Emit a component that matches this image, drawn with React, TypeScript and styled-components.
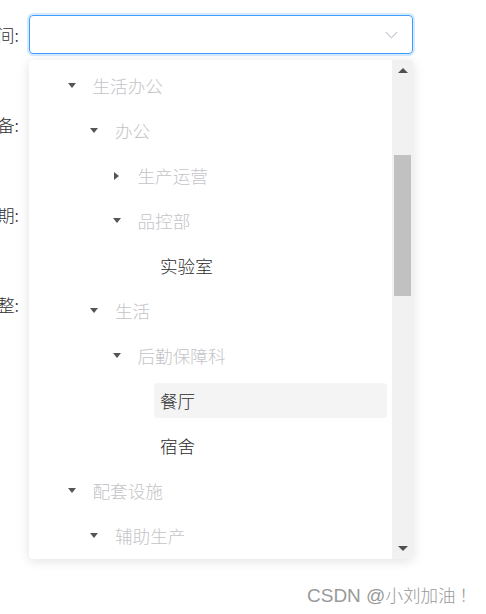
import React from 'react'
import styled, { createGlobalStyle } from 'styled-components'

interface TreeNode {
  label: string
  level: number
  caret?: 'down' | 'right'
  leaf?: boolean
  hover?: boolean
}

const nodes: TreeNode[] = [
  { label: '生活办公', level: 0, caret: 'down' },
  { label: '办公', level: 1, caret: 'down' },
  { label: '生产运营', level: 2, caret: 'right' },
  { label: '品控部', level: 2, caret: 'down' },
  { label: '实验室', level: 3, leaf: true },
  { label: '生活', level: 1, caret: 'down' },
  { label: '后勤保障科', level: 2, caret: 'down' },
  { label: '餐厅', level: 3, leaf: true, hover: true },
  { label: '宿舍', level: 3, leaf: true },
  { label: '配套设施', level: 0, caret: 'down' },
  { label: '辅助生产', level: 1, caret: 'down' }
]

const labels = ['时间:', '设备:', '日期:', '调整:']

const App: React.FC = () => {
  return (
    <Page>
      <GlobalStyle />
      <Form>
        {labels.map((label, i) => (
          <FormRow key={label}>
            <Label>{label}</Label>
            {i === 0 && (
              <SelectBox>
                <Chevron viewBox='0 0 14 8'>
                  <path d='M1 1 L7 7 L13 1' fill='none' stroke='#c0c4cc' strokeWidth='1.2' />
                </Chevron>
              </SelectBox>
            )}
          </FormRow>
        ))}
      </Form>

      <Dropdown>
        <TreeList>
          {nodes.map((node) => (
            <TreeRow key={node.label} level={node.level}>
              <CaretSlot>{node.caret && <Caret dir={node.caret} />}</CaretSlot>
              <NodeContent hover={node.hover}>
                <NodeLabel leaf={node.leaf}>{node.label}</NodeLabel>
              </NodeContent>
            </TreeRow>
          ))}
        </TreeList>
        <ScrollBar>
          <ScrollButton>
            <Arrow dir='up' />
          </ScrollButton>
          <ScrollTrack>
            <Thumb />
          </ScrollTrack>
          <ScrollButton>
            <Arrow dir='down' />
          </ScrollButton>
        </ScrollBar>
      </Dropdown>

      <Watermark>
        <WatermarkLatin>CSDN @</WatermarkLatin>
        小刘加油 ！
      </Watermark>
    </Page>
  )
}

export default App

const GlobalStyle = createGlobalStyle`
  html, body {
    margin: 0;
    padding: 0;
    background: #fff;
  }
  body {
    font-family: "Noto Sans CJK SC", "Noto Sans", sans-serif;
  }
`

const Page = styled.div`
  position: relative;
  width: 486px;
  height: 614px;
  overflow: hidden;
  background: #fff;
`

const Form = styled.div`
  display: flex;
  flex-direction: column;
  gap: 51px;
  padding-top: 15px;
`

const FormRow = styled.div`
  display: flex;
  align-items: center;
  gap: 10px;
  height: 39px;
`

const Label = styled.div`
  width: 19px;
  flex-shrink: 0;
  display: flex;
  justify-content: flex-end;
  white-space: nowrap;
  font-size: 17.6px;
  font-weight: 300;
  color: #303133;
`

const SelectBox = styled.div`
  box-sizing: border-box;
  width: 384px;
  height: 39px;
  border: 1px solid #409eff;
  border-radius: 4px;
  box-shadow: 0 0 0 2px rgba(64, 158, 255, 0.22);
  display: flex;
  align-items: center;
  justify-content: flex-end;
  padding-right: 14px;
`

const Chevron = styled.svg`
  width: 13px;
  height: 8px;
`

const Dropdown = styled.div`
  position: absolute;
  left: 29px;
  top: 60px;
  width: 384px;
  height: 499px;
  display: flex;
  background: #fff;
  border-radius: 4px;
  overflow: hidden;
  box-shadow: 0 2px 12px rgba(0, 0, 0, 0.12);
`

const TreeList = styled.div`
  flex: 1;
  padding: 3px 5px 0 0;
  overflow: hidden;
`

const TreeRow = styled.div<{ level: number }>`
  display: flex;
  align-items: center;
  height: 45px;
  padding-left: ${({ level }) => 34 + level * 22.5}px;
  gap: 6px;
`

const CaretSlot = styled.div`
  width: 17px;
  flex-shrink: 0;
  display: flex;
  align-items: center;
  justify-content: center;
`

const Caret = styled.span<{ dir: 'down' | 'right' }>`
  width: 0;
  height: 0;
  ${({ dir }) =>
    dir === 'down'
      ? `border-left: 4px solid transparent;
         border-right: 4px solid transparent;
         border-top: 5px solid #555;`
      : `border-top: 4px solid transparent;
         border-bottom: 4px solid transparent;
         border-left: 5px solid #555;`}
`

const NodeContent = styled.div<{ hover?: boolean }>`
  flex: 1;
  height: 35px;
  display: flex;
  align-items: center;
  padding-left: 6.5px;
  border-radius: 4px;
  background: ${({ hover }) => (hover ? '#f4f4f5' : 'transparent')};
`

const NodeLabel = styled.span<{ leaf?: boolean }>`
  font-size: 17.6px;
  font-weight: 300;
  color: ${({ leaf }) => (leaf ? '#2b2b2b' : '#c4c4c8')};
`

const ScrollBar = styled.div`
  width: 21px;
  flex-shrink: 0;
  display: flex;
  flex-direction: column;
  background: #f1f1f1;
`

const ScrollButton = styled.div`
  height: 21px;
  display: flex;
  align-items: center;
  justify-content: center;
`

const Arrow = styled.span<{ dir: 'up' | 'down' }>`
  width: 0;
  height: 0;
  border-left: 5px solid transparent;
  border-right: 5px solid transparent;
  ${({ dir }) =>
    dir === 'up' ? 'border-bottom: 5px solid #505050;' : 'border-top: 5px solid #505050;'}
`

const ScrollTrack = styled.div`
  flex: 1;
  padding: 74px 2px 0;
`

const Thumb = styled.div`
  height: 141px;
  background: #c1c1c1;
`

const Watermark = styled.div`
  position: absolute;
  left: 307px;
  bottom: 7px;
  display: flex;
  align-items: baseline;
  font-size: 17.5px;
  font-weight: 300;
  color: #999;
  white-space: pre;
  font-family: "Noto Sans CJK SC", sans-serif;
`

const WatermarkLatin = styled.span`
  font-family: "Liberation Sans", sans-serif;
  font-size: 19px;
  font-weight: 400;
`
